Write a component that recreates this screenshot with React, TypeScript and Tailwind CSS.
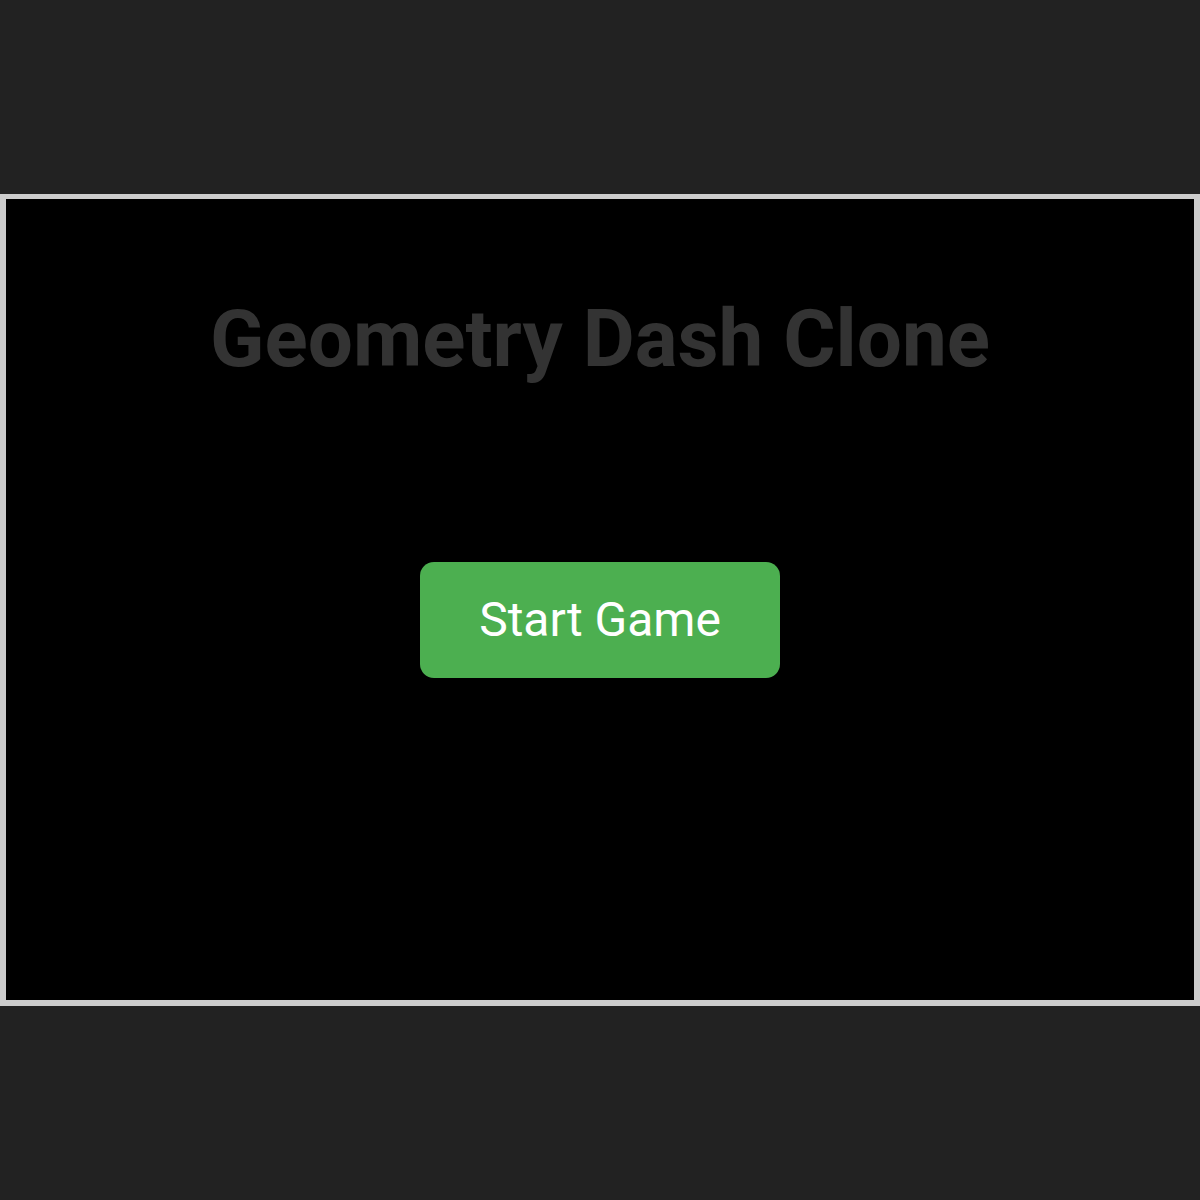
export default function App() {
  return (
    <div className="flex h-[1200px] w-[1200px] flex-col bg-[#222222]" style={{ fontFamily: "Roboto, sans-serif" }}>
      <div className="h-[194px] shrink-0" />
      <div className="flex h-[812px] shrink-0 flex-col items-center border-[6px] border-t-[5px] border-[#cccccc] bg-black">
        <h1 className="mt-[100px] text-[80px] font-bold leading-none text-[#333333]">Geometry Dash Clone</h1>
        <button className="mt-[183px] h-[116px] w-[360px] rounded-[14px] bg-[#4caf50] text-[48px] text-white">
          Start Game
        </button>
      </div>
    </div>
  );
}
